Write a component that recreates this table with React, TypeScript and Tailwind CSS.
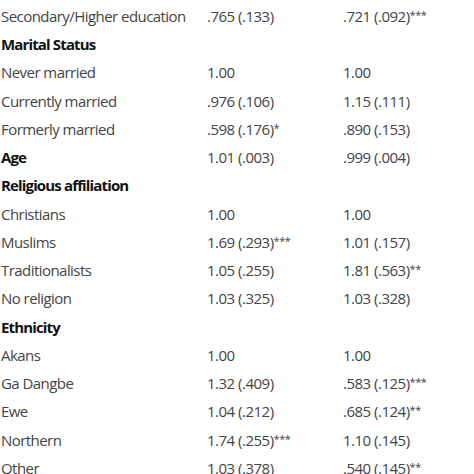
import React from "react";

type Row = { label: string; a?: string; b?: string; head?: boolean };

const rows: Row[] = [
  { label: "Secondary/Higher education", a: ".765 (.133)", b: ".721 (.092)***" },
  { label: "Marital Status", head: true },
  { label: "Never married", a: "1.00", b: "1.00" },
  { label: "Currently married", a: ".976 (.106)", b: "1.15 (.111)" },
  { label: "Formerly married", a: ".598 (.176)*", b: ".890 (.153)" },
  { label: "Age", a: "1.01 (.003)", b: ".999 (.004)", head: true },
  { label: "Religious affiliation", head: true },
  { label: "Christians", a: "1.00", b: "1.00" },
  { label: "Muslims", a: "1.69 (.293)***", b: "1.01 (.157)" },
  { label: "Traditionalists", a: "1.05 (.255)", b: "1.81 (.563)**" },
  { label: "No religion", a: "1.03 (.325)", b: "1.03 (.328)" },
  { label: "Ethnicity", head: true },
  { label: "Akans", a: "1.00", b: "1.00" },
  { label: "Ga Dangbe", a: "1.32 (.409)", b: ".583 (.125)***" },
  { label: "Ewe", a: "1.04 (.212)", b: ".685 (.124)**" },
  { label: "Northern", a: "1.74 (.255)***", b: "1.10 (.145)" },
  { label: "Other", a: "1.03 (.378)", b: ".540 (.145)**" },
];

function Val({ v }: { v?: string }) {
  if (!v) return <span />;
  const m = v.match(/^(.*?)(\*+)$/);
  if (m) {
    return (
      <span>
        {m[1]}
        <span className="text-[11px] relative top-[-3px] tracking-[-0.5px]">{m[2]}</span>
      </span>
    );
  }
  return <span>{v}</span>;
}

export default function App() {
  return (
    <div
      className="w-[474px] h-[474px] overflow-hidden bg-white pt-[2px] text-[15px] text-[#444]"
      style={{ fontFamily: '"Open Sans", "Noto Sans", sans-serif' }}
    >
      {rows.map((r, i) => (
        <div key={i} className="grid grid-cols-[207px_136px_1fr] h-[28.25px] items-center whitespace-nowrap">
          <span
            className={
              r.head
                ? "pl-[1px] font-bold text-[#111] tracking-[-0.85px]"
                : "pl-[1px] tracking-[-0.55px]"
            }
          >
            {r.label}
          </span>
          <span className="tracking-[-0.5px]">
            <Val v={r.a} />
          </span>
          <span className="tracking-[-0.5px]">
            <Val v={r.b} />
          </span>
        </div>
      ))}
    </div>
  );
}
